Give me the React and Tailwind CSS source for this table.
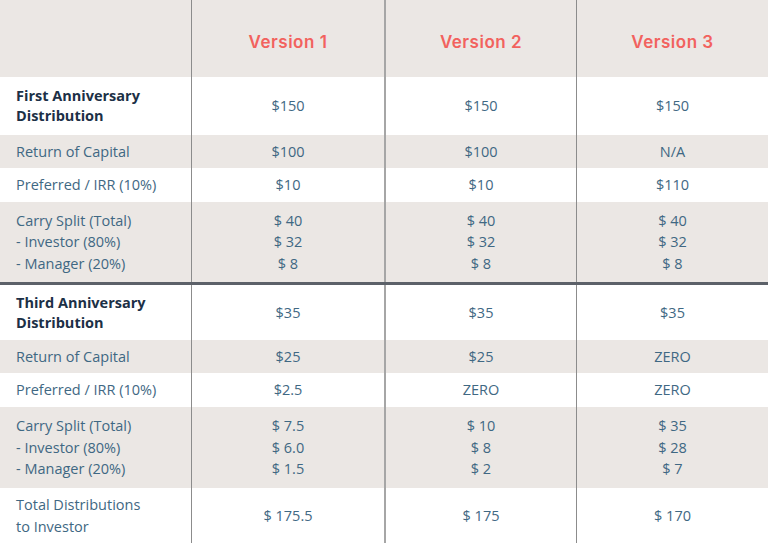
import React from "react";

const rows = [
  { h: "h-[58px]", bg: "bg-white", bold: true, label: ["First Anniversary", "Distribution"], vals: [["$150"], ["$150"], ["$150"]] },
  { h: "h-[33px]", bg: "bg-[#ebe7e4]", label: ["Return of Capital"], vals: [["$100"], ["$100"], ["N/A"]] },
  { h: "h-[34px]", bg: "bg-white", label: ["Preferred / IRR (10%)"], vals: [["$10"], ["$10"], ["$110"]] },
  { h: "h-[80px]", bg: "bg-[#ebe7e4]", label: ["Carry Split (Total)", "- Investor (80%)", "- Manager (20%)"], vals: [["$ 40", "$ 32", "$ 8"], ["$ 40", "$ 32", "$ 8"], ["$ 40", "$ 32", "$ 8"]] },
  { sep: true },
  { h: "h-[55px]", bg: "bg-white", bold: true, label: ["Third Anniversary", "Distribution"], vals: [["$35"], ["$35"], ["$35"]] },
  { h: "h-[33px]", bg: "bg-[#ebe7e4]", label: ["Return of Capital"], vals: [["$25"], ["$25"], ["ZERO"]] },
  { h: "h-[34px]", bg: "bg-white", label: ["Preferred / IRR (10%)"], vals: [["$2.5"], ["ZERO"], ["ZERO"]] },
  { h: "h-[81px]", bg: "bg-[#ebe7e4]", label: ["Carry Split (Total)", "- Investor (80%)", "- Manager (20%)"], vals: [["$ 7.5", "$ 6.0", "$ 1.5"], ["$ 10", "$ 8", "$ 2"], ["$ 35", "$ 28", "$ 7"]] },
  { h: "h-[55px]", bg: "bg-white", label: ["Total Distributions", "to Investor"], vals: [["$ 175.5"], ["$ 175"], ["$ 170"]] },
];

const borders = [
  "border-l border-[#8c8c8c]",
  "border-l-2 border-[#a6a6a6]",
  "border-l border-[#8c8c8c]",
];

function Row({ r }) {
  if (r.sep) return <div className="h-[3px] bg-[#5c6169]" />;
  return (
    <div className={`grid grid-cols-[191px_193px_192px_1fr] ${r.h} ${r.bg}`}>
      <div
        className={`flex flex-col justify-center pl-4 ${
          r.bold ? "font-bold text-[#1c3046] leading-[20px]" : "text-[#3f6883] leading-[21.5px]"
        }`}
      >
        {r.label.map((l) => (
          <span key={l}>{l}</span>
        ))}
      </div>
      {r.vals.map((v, i) => (
        <div key={i} className={`flex flex-col items-center justify-center text-[#3f6883] leading-[21.5px] ${borders[i]}`}>
          {v.map((t, j) => (
            <span key={j}>{t}</span>
          ))}
        </div>
      ))}
    </div>
  );
}

export default function App() {
  return (
    <div className="w-[768px] h-[543px] overflow-hidden bg-white text-[14.5px] font-['Open_Sans',sans-serif]">
      <div className="grid grid-cols-[191px_193px_192px_1fr] h-[77px] bg-[#ebe7e4]">
        <div />
        {["Version 1", "Version 2", "Version 3"].map((v, i) => (
          <div
            key={v}
            className={`flex items-center justify-center pt-[8px] text-[17px] font-semibold tracking-[0.03em] text-[#f2625e] font-['Inter',sans-serif] ${borders[i]}`}
          >
            {v}
          </div>
        ))}
      </div>
      {rows.map((r, i) => (
        <Row key={i} r={r} />
      ))}
    </div>
  );
}
